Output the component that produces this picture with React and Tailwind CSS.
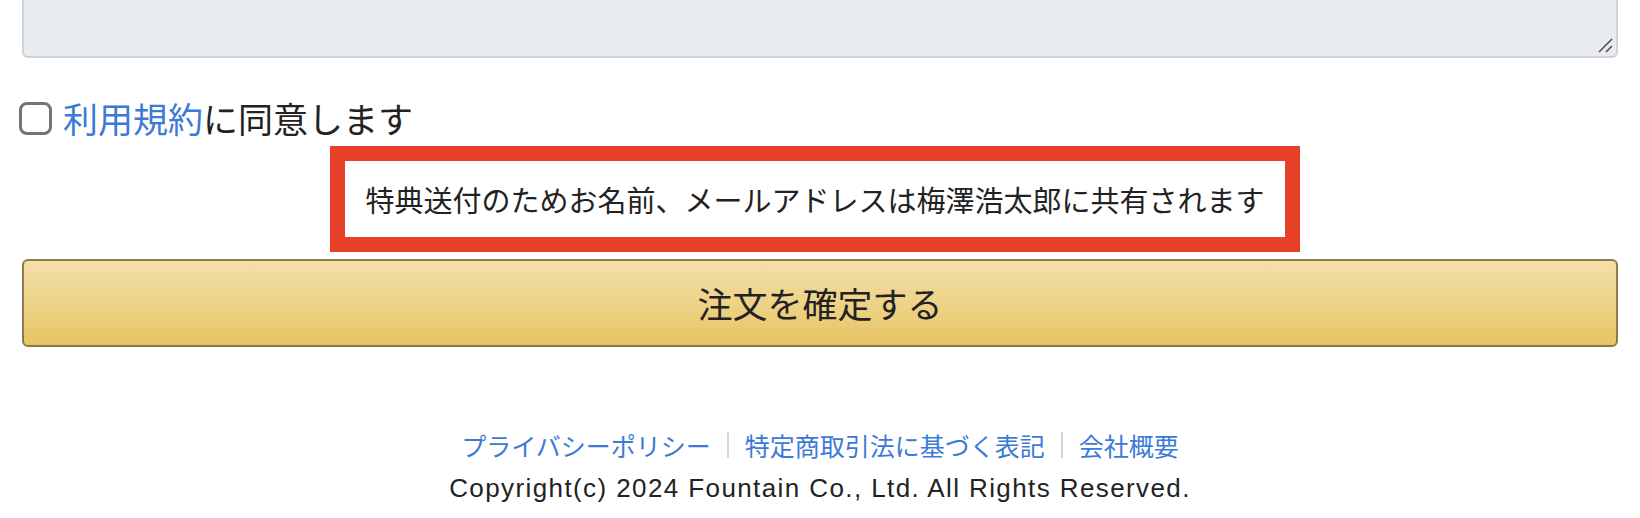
import React, { useState } from 'react';

const jp = "font-['Noto_Sans_CJK_JP',sans-serif]";

const App = () => {
    const [agreed, setAgreed] = useState(false);

    return (
        <div className={`w-[1640px] h-[518px] overflow-hidden bg-white px-[22px] text-[#222] ${jp}`}>
            {/* bottom of the message textarea */}
            <div className="relative h-[58px] rounded-b-[6px] border-x-2 border-b-2 border-[#cfd2d6] bg-[#e8ebef]">
                <svg className="absolute right-[3px] bottom-[3px]" width="16" height="16" viewBox="0 0 16 16">
                    <path d="M2 15 L15 2 M9 15 L15 9" stroke="#555" strokeWidth="1.6" fill="none" />
                </svg>
            </div>

            {/* 規約への同意 */}
            <label className="mt-[42px] flex h-[36px] items-center gap-[11px] -ml-[3px] cursor-pointer">
                <input type="checkbox" className="hidden" checked={agreed} onChange={(e) => setAgreed(e.target.checked)} />
                <span className="h-[33px] w-[33px] rounded-[8px] border-[3px] border-[#747474] bg-white"></span>
                <span className="text-[35px] leading-[36px]">
                    <a href="#" className="text-[#3b7ad6]">利用規約</a>に同意します
                </span>
            </label>

            <div className="mt-[10px] flex justify-center">
                <div className="-ml-[10px] border-[15px] border-[#e8412a] bg-white px-[20px]">
                    <p className="h-[76px] text-[29px] leading-[76px]">特典送付のためお名前、メールアドレスは梅澤浩太郎に共有されます</p>
                </div>
            </div>

            <button className="mt-[7px] flex h-[88px] w-full items-center justify-center rounded-[6px] border-2 border-[#8c7a4c] bg-gradient-to-b from-[#f3e1aa] to-[#e8c462] text-[35px] text-[#222]">
                注文を確定する
            </button>

            <footer className="mt-[83px] flex flex-col items-center">
                <div className="flex items-center text-[25px] leading-[30px] text-[#3b7ad6]">
                    <a href="#">プライバシーポリシー</a>
                    <span className="mx-[16px] h-[26px] w-[2px] bg-[#d6d6d6]"></span>
                    <a href="#">特定商取引法に基づく表記</a>
                    <span className="mx-[16px] h-[26px] w-[2px] bg-[#d6d6d6]"></span>
                    <a href="#">会社概要</a>
                </div>
                <p className="mt-[13px] font-['Liberation_Sans','Noto_Sans_CJK_JP',sans-serif] text-[26px] leading-[30px] tracking-[1.4px] text-[#222]">
                    Copyright(c) 2024 Fountain Co., Ltd. All Rights Reserved.
                </p>
            </footer>
        </div>
    );
};

export default App;
